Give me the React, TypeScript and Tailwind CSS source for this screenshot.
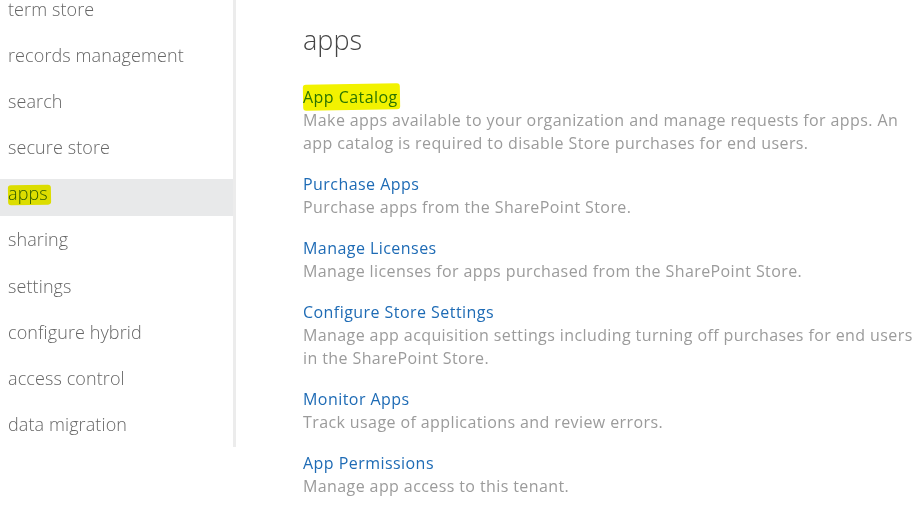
import React from "react";

const navItems = [
  "term store",
  "records management",
  "search",
  "secure store",
  "apps",
  "sharing",
  "settings",
  "configure hybrid",
  "access control",
  "data migration",
];

const sections: { title: string; desc: string; marked?: boolean }[] = [
  {
    title: "App Catalog",
    desc: "Make apps available to your organization and manage requests for apps. An app catalog is required to disable Store purchases for end users.",
    marked: true,
  },
  { title: "Purchase Apps", desc: "Purchase apps from the SharePoint Store." },
  { title: "Manage Licenses", desc: "Manage licenses for apps purchased from the SharePoint Store." },
  {
    title: "Configure Store Settings",
    desc: "Manage app acquisition settings including turning off purchases for end users in the SharePoint Store.",
  },
  { title: "Monitor Apps", desc: "Track usage of applications and review errors." },
  { title: "App Permissions", desc: "Manage app access to this tenant." },
];

function Marker({ className }: { className: string }) {
  return (
    <span
      className={`pointer-events-none absolute bg-[#f2f200] mix-blend-multiply rounded-[3px] ${className}`}
    />
  );
}

export default function App() {
  return (
    <div
      className="flex h-[507px] w-[917px] overflow-hidden bg-white"
      style={{ fontFamily: '"Open Sans", "Noto Sans", Arial, sans-serif' }}
    >
      <aside className="mt-[-6px] flex w-[236px] shrink-0 flex-col gap-[9.2px] self-start border-r-[3px] border-[#ececec]">
        {navItems.map((item) => {
          const active = item === "apps";
          return (
            <div
              key={item}
              className={`h-[37px] pl-2 pt-[2.5px] text-[18px] font-light leading-[25px] tracking-[0.1px] ${
                active ? "bg-[#e8e9ea] text-[#2f5f20]" : "text-[#666666]"
              }`}
            >
              <span className="relative">
                {item}
                {active && <Marker className="left-0 right-[-3px] top-[4px] bottom-[0px] -rotate-1" />}
              </span>
            </div>
          );
        })}
      </aside>

      <main className="flex flex-1 flex-col pl-[67px] pt-[22px]">
        <h1 className="text-[27px] font-light leading-[36px] text-[#444444]">apps</h1>
        <div className="mt-[28px] flex flex-col gap-[18px]">
          {sections.map((s) => (
            <div key={s.title} className="flex flex-col">
              <span
                className={`relative self-start text-[16px] leading-[23px] tracking-[0.45px] ${
                  s.marked ? "text-[#2d7a1e]" : "text-[#1e6bb5]"
                }`}
              >
                {s.title}
                {s.marked && <Marker className="left-0 right-[-2px] top-[-2px] bottom-[-1px] -rotate-1" />}
              </span>
              <p className="w-[612px] text-[16px] leading-[23px] tracking-[0.4px] text-[#9b9b9b]">{s.desc}</p>
            </div>
          ))}
        </div>
      </main>
    </div>
  );
}
